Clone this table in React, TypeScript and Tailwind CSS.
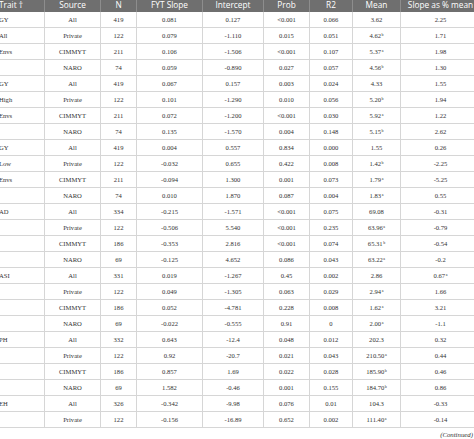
const HEADERS = ["Trait †", "Source", "N", "FYT Slope", "Intercept", "Prob", "R2", "Mean", "Slope as % mean"];

// [trait, source, n, slope, intercept, prob, r2, mean, meanSup, pct, pctSup]
const ROWS: string[][] = [
  ["GY", "All", "419", "0.081", "0.127", "<0.001", "0.066", "3.62", "", "2.25", ""],
  ["All", "Private", "122", "0.079", "-1.110", "0.015", "0.051", "4.62", "b", "1.71", ""],
  ["Envs", "CIMMYT", "211", "0.106", "-1.506", "<0.001", "0.107", "5.37", "a", "1.98", ""],
  ["", "NARO", "74", "0.059", "-0.890", "0.027", "0.057", "4.56", "b", "1.30", ""],
  ["GY", "All", "419", "0.067", "0.157", "0.003", "0.024", "4.33", "", "1.55", ""],
  ["High", "Private", "122", "0.101", "-1.290", "0.010", "0.056", "5.20", "b", "1.94", ""],
  ["Envs", "CIMMYT", "211", "0.072", "-1.200", "<0.001", "0.030", "5.92", "a", "1.22", ""],
  ["", "NARO", "74", "0.135", "-1.570", "0.004", "0.148", "5.15", "b", "2.62", ""],
  ["GY", "All", "419", "0.004", "0.557", "0.834", "0.000", "1.55", "", "0.26", ""],
  ["Low", "Private", "122", "-0.032", "0.655", "0.422", "0.008", "1.42", "b", "-2.25", ""],
  ["Envs", "CIMMYT", "211", "-0.094", "1.300", "0.001", "0.073", "1.79", "a", "-5.25", ""],
  ["", "NARO", "74", "0.010", "1.870", "0.087", "0.004", "1.83", "a", "0.55", ""],
  ["AD", "All", "334", "-0.215", "-1.571", "<0.001", "0.075", "69.08", "", "-0.31", ""],
  ["", "Private", "122", "-0.506", "5.540", "<0.001", "0.235", "63.96", "a", "-0.79", ""],
  ["", "CIMMYT", "186", "-0.353", "2.816", "<0.001", "0.074", "65.31", "b", "-0.54", ""],
  ["", "NARO", "69", "-0.125", "4.652", "0.086", "0.043", "63.22", "a", "-0.2", ""],
  ["ASI", "All", "331", "0.019", "-1.267", "0.45", "0.002", "2.86", "", "0.67", "a"],
  ["", "Private", "122", "0.049", "-1.305", "0.063", "0.029", "2.94", "a", "1.66", ""],
  ["", "CIMMYT", "186", "0.052", "-4.781", "0.228", "0.008", "1.62", "a", "3.21", ""],
  ["", "NARO", "69", "-0.022", "-0.555", "0.91", "0", "2.00", "a", "-1.1", ""],
  ["PH", "All", "332", "0.643", "-12.4", "0.048", "0.012", "202.3", "", "0.32", ""],
  ["", "Private", "122", "0.92", "-20.7", "0.021", "0.043", "210.50", "a", "0.44", ""],
  ["", "CIMMYT", "186", "0.857", "1.69", "0.022", "0.028", "185.90", "b", "0.46", ""],
  ["", "NARO", "69", "1.582", "-0.46", "0.001", "0.155", "184.70", "b", "0.86", ""],
  ["EH", "All", "326", "-0.342", "-9.98", "0.076", "0.01", "104.3", "", "-0.33", ""],
  ["", "Private", "122", "-0.156", "-16.89", "0.652", "0.002", "111.40", "a", "-0.14", ""],
];

const GRID = "grid grid-cols-[49px_56px_36px_66px_61px_46px_43px_48px_80px]";

function Sup({ s }: { s: string }) {
  if (!s) return null;
  return <sup className="text-[4px] relative top-[-1px] ml-[0.5px]">{s}</sup>;
}

export default function App() {
  return (
    <div className="w-[474px] h-[439px] overflow-hidden bg-white">
      <div className="ml-[-4px] w-[485px]">
        <div className={`${GRID} h-[12px] bg-[#6f6f6f] text-white text-[8.3px] font-['Open_Sans',sans-serif] leading-[9px]`}>
          {HEADERS.map((h, i) => (
            <div
              key={h}
              className={`h-[12px] border-r border-[#8d8d8d] whitespace-nowrap overflow-hidden ${i === 0 ? "pl-[3px] text-left" : "text-center"}`}
            >
              {h}
            </div>
          ))}
        </div>
        {ROWS.map((r, ri) => {
          const cells = [r[0], r[1], r[2], r[3], r[4], r[5], r[6]];
          return (
            <div
              key={ri}
              className={`${GRID} h-[16px] text-[6.6px] text-[#333] font-['Liberation_Serif',serif]`}
            >
              {cells.map((c, ci) => (
                <div
                  key={ci}
                  className={`h-[16px] border-r border-b border-[#d6d6d6] flex items-center whitespace-nowrap ${ci === 0 ? "pl-[3px] justify-start" : "justify-center"}`}
                >
                  {c}
                </div>
              ))}
              <div className="h-[16px] border-r border-b border-[#d6d6d6] flex items-center justify-center whitespace-nowrap">
                {r[7]}
                <Sup s={r[8]} />
              </div>
              <div className="h-[16px] border-r border-b border-[#d6d6d6] flex items-center justify-center whitespace-nowrap">
                {r[9]}
                <Sup s={r[10]} />
              </div>
            </div>
          );
        })}
      </div>
      <div className="flex justify-end pr-[1px] mt-[2px]">
        <span className="text-[6.8px] italic text-[#333] font-['Liberation_Serif',serif] leading-[9px]">(Continued)</span>
      </div>
    </div>
  );
}
